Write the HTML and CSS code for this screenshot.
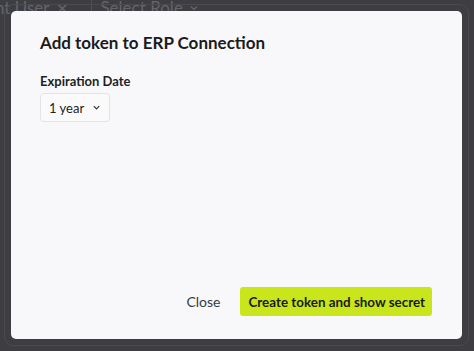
FILE: index.html
```html
<!DOCTYPE html>
<html>
<head>
<meta charset="utf-8">
<link rel="stylesheet" href="styles.css">
</head>
<body>
<div class="page">
  <div class="toolbar">
    <span class="chip">nt User <span class="x">✕</span></span>
    <span class="divider"></span>
    <span class="role">Select Role <svg class="chev-bg" width="10" height="10" viewBox="0 0 10 10"><path d="M2 3.5 L5 6.5 L8 3.5" fill="none" stroke="currentColor" stroke-width="1.3"/></svg></span>
  </div>
</div>
<div class="overlay">
  <div class="frame"></div>
  <div class="modal">
    <h1 class="title">Add token to ERP Connection</h1>
    <div class="field">
      <label class="label">Expiration Date</label>
      <div class="select">
        <span>1 year</span>
        <svg class="chev" width="9" height="9" viewBox="0 0 10 10"><path d="M2 3.5 L5 6.5 L8 3.5" fill="none" stroke="#333" stroke-width="1.3"/></svg>
      </div>
    </div>
    <div class="footer">
      <button class="btn-close">Close</button>
      <button class="btn-primary">Create token and show secret</button>
    </div>
  </div>
</div>
</body>
</html>
```
FILE: styles.css
```css
html, body {
  margin: 0;
  padding: 0;
  width: 474px;
  height: 351px;
  overflow: hidden;
  font-family: "Lato", "Liberation Sans", sans-serif;
  background: #3e3e42;
}
.page {
  height: 351px;
}
.toolbar {
  display: flex;
  align-items: flex-start;
  height: 14px;
  color: #646469;
  font-size: 17px;
  margin-left: -5px;
}
.chip {
  display: inline-flex;
  align-items: center;
  gap: 7px;
  line-height: 16px;
  margin-top: 0;
}
.x { font-size: 15px; }
.divider {
  width: 1px;
  height: 14px;
  background: #505055;
  margin-left: 22px;
}
.role {
  display: inline-flex;
  align-items: center;
  gap: 6px;
  margin-left: 8px;
  line-height: 16px;
}
.overlay {
  position: fixed;
  inset: 0;
}
.frame {
  position: absolute;
  left: 4px;
  top: 4px;
  right: 5px;
  bottom: 5px;
  border: 1px solid #4a4a4f;
  border-radius: 9px;
}
.modal {
  position: absolute;
  left: 11px;
  top: 11px;
  width: 451px;
  height: 328px;
  box-sizing: border-box;
  background: #f8f8fa;
  border-radius: 5px;
  padding: 20px 30px 23px 29px;
  display: flex;
  flex-direction: column;
}
.title {
  margin: 0;
  font-size: 17px;
  line-height: 24px;
  font-weight: 700;
  color: #1b1b1d;
}
.field {
  margin-top: 18px;
  display: flex;
  flex-direction: column;
  align-items: flex-start;
}
.label {
  font-size: 13px;
  line-height: 16px;
  font-weight: 700;
  color: #1f1f22;
}
.select {
  margin-top: 4px;
  height: 29px;
  box-sizing: border-box;
  border: 1px solid #e3e3e6;
  border-radius: 4px;
  background: #fafafb;
  display: flex;
  align-items: center;
  gap: 8px;
  padding: 0 8px 0 8px;
  font-size: 13px;
  color: #222;
}
.footer {
  margin-top: auto;
  display: flex;
  justify-content: flex-end;
  align-items: center;
  gap: 20px;
}
.btn-close {
  border: 0;
  background: transparent;
  font-family: inherit;
  font-size: 14px;
  color: #3a3a3d;
  padding: 0;
  font-weight: 400;
}
.btn-primary {
  border: 0;
  background: #c9e51b;
  border-radius: 3px;
  height: 29px;
  padding: 0 7px 0 8px;
  font-family: inherit;
  font-size: 13.4px;
  font-weight: 700;
  color: #1b1b1d;
}
```
